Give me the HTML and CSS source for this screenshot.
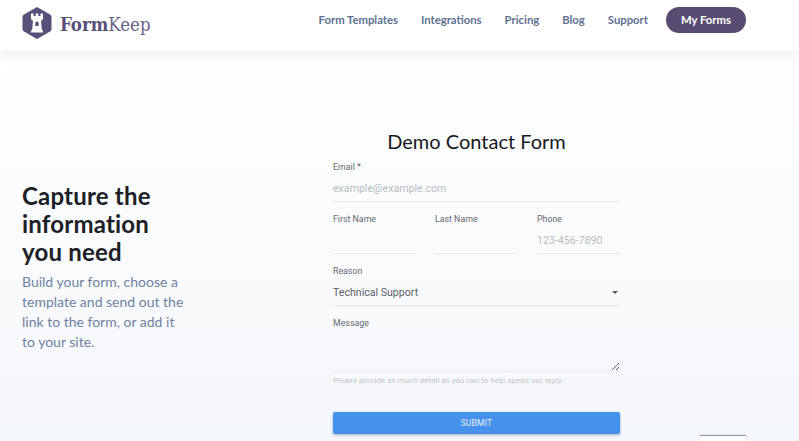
FILE: index.html
```html
<!DOCTYPE html>
<html lang="en">

<head>
    <meta charset="UTF-8" />
    <meta name="viewport" content="width=device-width, initial-scale=1.0" />
    <title>FormKeep - Demo Contact Form</title>
    <link rel="stylesheet" href="styles.css">
</head>

<body>
    <header class="site-header">
        <a class="logo" href="#">
            <svg class="logo-mark" viewBox="0 0 30 34" width="30" height="34" aria-hidden="true">
                <path d="M15 1 L28 8.500 Q29.500 9.400 29.500 11 L29.500 23 Q29.500 24.600 28 25.500 L15 33 L2 25.500 Q0.500 24.600 0.500 23 L0.500 11 Q0.500 9.400 2 8.500 Z" fill="#59507a" />
                <path fill-rule="evenodd" d="M9 7.500 H11.500 V10 H13.700 V7.500 H16.300 V10 H18.500 V7.500 H21 V13 L19 15 L19.800 23.500 L21 25 V26.500 H9 V25 L10.200 23.500 L11 15 L9 13 Z M15 15.500 A1.700 1.700 0 0 0 13.300 17.200 V20 H16.700 V17.200 A1.700 1.700 0 0 0 15 15.500 Z" fill="#fff" />
            </svg>
            <span class="logo-text"><b>Form</b>Keep</span>
        </a>
        <nav class="main-nav">
            <a href="#">Form Templates</a>
            <a href="#">Integrations</a>
            <a href="#">Pricing</a>
            <a href="#">Blog</a>
            <a href="#">Support</a>
            <a class="nav-button" href="#">My Forms</a>
        </nav>
    </header>

    <main class="content">
        <section class="intro">
            <h1 class="intro-title">Capture the information you need</h1>
            <p class="intro-text">Build your form, choose a template and send out the link to the form, or add it to your site.</p>
        </section>

        <section class="demo">
            <h2 class="demo-title">Demo Contact Form</h2>
            <form class="demo-form">
                <div class="field">
                    <label class="field-label">Email *</label>
                    <input class="field-input" type="text" placeholder="example@example.com">
                </div>
                <div class="field-row">
                    <div class="field">
                        <label class="field-label">First Name</label>
                        <input class="field-input" type="text">
                    </div>
                    <div class="field">
                        <label class="field-label">Last Name</label>
                        <input class="field-input" type="text">
                    </div>
                    <div class="field">
                        <label class="field-label">Phone</label>
                        <input class="field-input" type="text" placeholder="123-456-7890">
                    </div>
                </div>
                <div class="field">
                    <label class="field-label">Reason</label>
                    <div class="field-select">
                        <span>Technical Support</span>
                        <span class="select-arrow"></span>
                    </div>
                </div>
                <div class="field">
                    <label class="field-label">Message</label>
                    <textarea class="field-textarea"></textarea>
                    <p class="field-help">Please provide as much detail as you can to help speed our reply</p>
                </div>
                <button class="submit-button" type="button">SUBMIT</button>
            </form>
        </section>
    </main>

    <div class="corner-tab"></div>
</body>

</html>
```

FILE: styles.css
```css
html,
body {
    height: 100%;
}

body {
    margin: 0;
    overflow: hidden;
    background: linear-gradient(#fff 51px, #fbfcfd 180px, #f4f7fb 441px);
    font-family: 'Lato', sans-serif;
}

a {
    text-decoration: none;
}

.site-header {
    display: flex;
    align-items: flex-start;
    justify-content: space-between;
    box-sizing: border-box;
    height: 51px;
    padding: 6px 53px 0 22px;
    background: white;
    box-shadow: 0 2px 12px rgba(60, 70, 90, 0.13);
}

.logo {
    display: flex;
    align-items: center;
    gap: 8px;
    color: #59507a;
}

.logo-mark {
    display: block;
}

.logo-text {
    margin-top: 3px;
    font-family: 'DejaVu Serif', serif;
    font-size: 18.500px;
    font-stretch: condensed;
    color: #6a6388;
}

.logo-text b {
    font-weight: 700;
    color: #59507a;
}

.main-nav {
    display: flex;
    align-items: center;
    gap: 23px;
    padding-top: 1px;
    font-size: 11.300px;
    font-weight: 700;
}

.main-nav a {
    margin-top: -2px;
    color: #5f7192;
}

.main-nav .nav-button {
    width: 80px;
    height: 26px;
    margin-top: 0;
    margin-left: -5px;
    border-radius: 13px;
    background: #584c72;
    color: white;
    line-height: 26px;
    text-align: center;
}

.content {
    display: flex;
    padding: 77px 0 0 22px;
}

.intro {
    width: 165px;
    margin-top: 54px;
}

.intro-title {
    max-width: 140px;
    margin: 0;
    font-size: 24px;
    font-weight: 700;
    letter-spacing: 0.2px;
    line-height: 28px;
    color: #1d2126;
}

.intro-text {
    margin: 6px 0 0;
    font-size: 14px;
    line-height: 20px;
    color: #6f82a0;
}

.demo {
    width: 287px;
    margin-left: 146px;
}

.demo-title {
    margin: 0 0 6px;
    font-size: 20px;
    font-weight: 400;
    line-height: 26px;
    text-align: center;
    color: #16191d;
}

.demo-form {
    display: flex;
    flex-direction: column;
    gap: 10px;
    font-family: 'Roboto', sans-serif;
}

.field-row {
    display: grid;
    grid-template-columns: repeat(3, 83px);
    gap: 19px;
}

.field-label {
    display: block;
    font-size: 8.800px;
    line-height: 14px;
    color: #666a70;
}

.field-input,
.field-select {
    box-sizing: border-box;
    width: 100%;
    height: 28px;
    padding: 2px 0 0;
    border: 0;
    border-bottom: 1px solid #e6e9ed;
    background: transparent;
    font-family: inherit;
    font-size: 10.600px;
    outline: none;
}

.field-input::placeholder {
    color: #b9bcc1;
    opacity: 1;
}

.field-select {
    display: flex;
    align-items: center;
    justify-content: space-between;
    color: #5c6066;
}

.select-arrow {
    width: 0;
    height: 0;
    margin-right: 2px;
    border-top: 3px solid #55585d;
    border-left: 3px solid transparent;
    border-right: 3px solid transparent;
}

.field-textarea {
    display: block;
    box-sizing: border-box;
    width: 100%;
    height: 42px;
    padding: 0;
    border: 0;
    border-bottom: 1px solid #e6e9ed;
    background: transparent;
    outline: none;
}

.field-help {
    margin: 4px 0 0;
    font-size: 8px;
    line-height: 10px;
    color: #c2c5ca;
}

.submit-button {
    height: 22px;
    margin-top: 16px;
    border: 0;
    border-radius: 2px;
    background: #4591ec;
    box-shadow: 0 1px 3px rgba(40, 60, 90, 0.4);
    color: #e4effc;
    font-family: inherit;
    font-size: 8.500px;
    letter-spacing: 0.2px;
}

.corner-tab {
    position: absolute;
    left: 700px;
    top: 436px;
    width: 46px;
    height: 5px;
    background: white;
    box-shadow: 0 -1px 1px rgba(80, 80, 80, 0.55);
}
```
